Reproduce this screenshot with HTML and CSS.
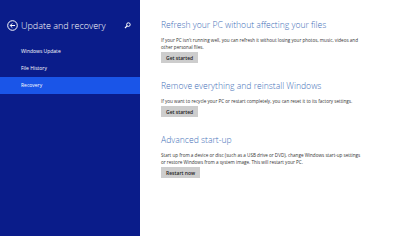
FILE: index.html
```
<!DOCTYPE html>
<html lang="en">
<head>
    <meta charset="UTF-8">
    <title>Update and recovery</title>
    <link rel="stylesheet" href="styles.css">
</head>
<body>
    <div class="sidebar">
        <div class="header">
            <svg class="back" width="11" height="11" viewBox="0 0 11 11">
                <circle cx="5.5" cy="5.5" r="4.8" fill="none" stroke="#fff" stroke-width="1"/>
                <path d="M8 5.5H3.3M5.3 3.4L3.2 5.5l2.1 2.1" fill="none" stroke="#fff" stroke-width="1"/>
            </svg>
            <span class="title">Update and recovery</span>
            <svg class="search" width="7" height="7" viewBox="0 0 7 7">
                <circle cx="4.4" cy="2.6" r="1.8" fill="none" stroke="#fff" stroke-width="1"/>
                <path d="M3.2 3.8L1 6" stroke="#fff" stroke-width="1.2"/>
            </svg>
        </div>
        <div class="nav">
            <div class="item">Windows Update</div>
            <div class="item">File History</div>
            <div class="item active">Recovery</div>
        </div>
    </div>
    <div class="content">
        <div class="section">
            <h2>Refresh your PC without affecting your files</h2>
            <p>If your PC isn't running well, you can refresh it without losing your photos, music, videos and other personal files.</p>
            <button>Get started</button>
        </div>
        <div class="section">
            <h2>Remove everything and reinstall Windows</h2>
            <p>If you want to recycle your PC or restart completely, you can reset it to its factory settings.</p>
            <button>Get started</button>
        </div>
        <div class="section">
            <h2>Advanced start-up</h2>
            <p>Start up from a device or disc (such as a USB drive or DVD), change Windows start-up settings or restore Windows from a system image. This will restart your PC.</p>
            <button>Restart now</button>
        </div>
    </div>
</body>
</html>
```

FILE: styles.css
```
body {
    margin: 0;
    display: flex;
    height: 236px;
    font-family: "Open Sans", "Noto Sans", sans-serif;
    background: #fff;
}
.sidebar { /* panel azul de la izquierda */
    width: 140px;
    flex-shrink: 0;
    background-color: #0a1c8a;
    color: #fff;
}
.header {
    display: flex;
    align-items: center;
    height: 22px;
    margin-top: 14px;
    padding-left: 7px;
}
.back {
    margin-right: 3px;
}
.title {
    font-size: 9px;
    font-weight: 300;
    white-space: nowrap;
    flex: 1;
}
.search {
    margin-right: 9px;
}
.nav {
    margin-top: 7px;
}
.item {
    height: 17px;
    line-height: 17px;
    font-size: 5px;
    padding-left: 21px;
}
.item.active {
    background-color: #1a55e8;
}
.content { /* zona blanca con las secciones */
    flex: 1;
    padding: 19px 0 0 21px;
    color: #333;
}
.section {
    margin-bottom: 17px;
}
h2 {
    margin: 0 0 5.5px;
    font-size: 8.6px;
    line-height: 12px;
    font-weight: 300;
    color: #4470b8;
}
p {
    margin: 0 0 1.5px;
    width: 205px;
    font-size: 4.6px;
    line-height: 7px;
}
button {
    display: block;
    height: 11px;
    padding: 0 5px;
    border: none;
    background-color: #cdcdcd;
    font-family: "Open Sans", sans-serif;
    font-size: 5px;
    font-weight: 600;
    color: #222;
}
```
